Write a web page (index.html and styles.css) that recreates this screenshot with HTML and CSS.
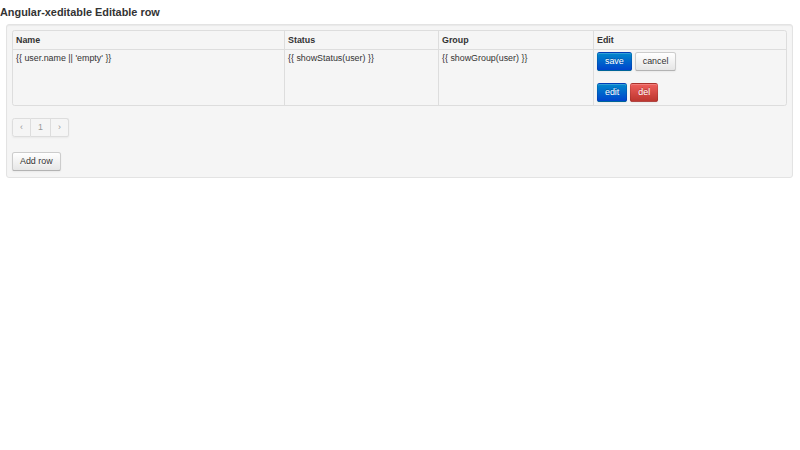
FILE: index.html
```html
<!DOCTYPE html>
<html>
<head>
<meta charset="utf-8">
<title>Angular-xeditable Editable row</title>
<link rel="stylesheet" href="styles.css">
</head>
<body>
<h4 class="title">Angular-xeditable Editable row</h4>
<div class="well">
  <table class="grid">
    <colgroup>
      <col class="c-name">
      <col class="c-status">
      <col class="c-group">
      <col class="c-edit">
    </colgroup>
    <thead>
      <tr>
        <th>Name</th>
        <th>Status</th>
        <th>Group</th>
        <th>Edit</th>
      </tr>
    </thead>
    <tbody>
      <tr>
        <td>{{ user.name || 'empty' }}</td>
        <td>{{ showStatus(user) }}</td>
        <td>{{ showGroup(user) }}</td>
        <td>
          <form class="btn-row form-buttons">
            <button type="button" class="btn btn-primary">save</button>
            <button type="button" class="btn">cancel</button>
          </form>
          <div class="btn-row">
            <button type="button" class="btn btn-primary">edit</button>
            <button type="button" class="btn btn-danger">del</button>
          </div>
        </td>
      </tr>
    </tbody>
  </table>
  <ul class="pagination">
    <li class="disabled"><a>&lsaquo;</a></li>
    <li class="active"><a>1</a></li>
    <li class="disabled"><a>&rsaquo;</a></li>
  </ul>
  <button type="button" class="btn add-btn">Add row</button>
</div>
</body>
</html>
```

FILE: styles.css
```css
html, body {
  margin: 0;
  padding: 0;
  background: #ffffff;
}

body {
  font-family: "Liberation Sans", Arial, Helvetica, sans-serif;
  font-size: 8.9px;
  line-height: 12.86px;
  color: #333333;
}

.title {
  margin: 6px 0 5px 0;
  font-size: 10.9px;
  line-height: 13px;
  font-weight: bold;
  color: #333333;
}

.well {
  margin: 0 7px 0 6px;
  padding: 5px 5px 5.5px 5px;
  background-color: #f5f5f5;
  border: 1px solid #e3e3e3;
  border-radius: 3px;
  box-shadow: inset 0 1px 1px rgba(0, 0, 0, 0.05);
}

.grid {
  width: 100%;
  table-layout: fixed;
  border-collapse: separate;
  border-spacing: 0;
  border: 1px solid #dddddd;
  border-radius: 2.6px;
  margin: 0 0 12px 0;
}

.c-name { width: 271px; }
.c-status { width: 154px; }
.c-group { width: 155px; }
.c-edit { width: auto; }

.grid th,
.grid td {
  padding: 2.5px 3px;
  text-align: left;
  vertical-align: top;
  line-height: 12.86px;
  border-left: 1px solid #dddddd;
}

.grid th:first-child,
.grid td:first-child {
  border-left: 0;
}

.grid th {
  font-weight: bold;
}

.grid td {
  border-top: 1px solid #dddddd;
}

.btn-row {
  display: flex;
  gap: 3px;
  margin: 0;
}

.form-buttons {
  margin-bottom: 12px;
}

.btn {
  display: inline-block;
  margin: 0;
  padding: 2px 7px;
  font-family: "Liberation Sans", Arial, Helvetica, sans-serif;
  font-size: 8.9px;
  line-height: 12.86px;
  color: #333333;
  text-align: center;
  text-shadow: 0 1px 1px rgba(255, 255, 255, 0.75);
  background-color: #f5f5f5;
  background-image: linear-gradient(to bottom, #ffffff, #e6e6e6);
  border: 1px solid #cccccc;
  border-bottom-color: #b3b3b3;
  border-radius: 2.6px;
  box-shadow: inset 0 1px 0 rgba(255, 255, 255, 0.2), 0 1px 2px rgba(0, 0, 0, 0.05);
  cursor: pointer;
}

.btn-primary {
  color: #ffffff;
  text-shadow: 0 -1px 0 rgba(0, 0, 0, 0.25);
  background-color: #006dcc;
  background-image: linear-gradient(to bottom, #0088cc, #0044cc);
  border-color: rgba(0, 0, 0, 0.1) rgba(0, 0, 0, 0.1) rgba(0, 0, 0, 0.25);
}

.btn-danger {
  color: #ffffff;
  text-shadow: 0 -1px 0 rgba(0, 0, 0, 0.25);
  background-color: #da4f49;
  background-image: linear-gradient(to bottom, #ee5f5b, #bd362f);
  border-color: rgba(0, 0, 0, 0.1) rgba(0, 0, 0, 0.1) rgba(0, 0, 0, 0.25);
}

.pagination {
  display: inline-flex;
  list-style: none;
  margin: 0 0 15px 0;
  padding: 0;
  border-radius: 2.6px;
  box-shadow: 0 1px 2px rgba(0, 0, 0, 0.05);
}

.pagination li a {
  display: block;
  padding: 2.5px 7px;
  line-height: 12.86px;
  color: #999999;
  background-color: transparent;
  border: 1px solid #dddddd;
  border-left-width: 0;
}

.pagination li.active a {
  background-color: #f5f5f5;
}

.pagination li:first-child a {
  border-left-width: 1px;
  border-radius: 2.6px 0 0 2.6px;
}

.pagination li:last-child a {
  border-radius: 0 2.6px 2.6px 0;
}

.add-btn {
  display: block;
}
```
